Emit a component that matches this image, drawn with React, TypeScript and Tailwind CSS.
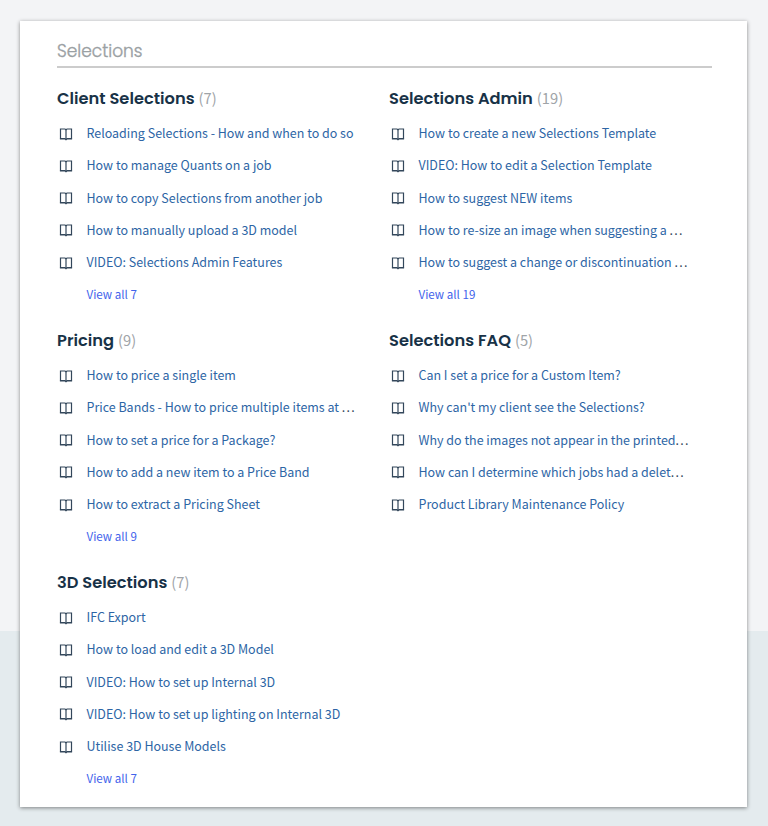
interface Folder {
	title: string
	count: number
	articles: string[]
}

const folders: Folder[] = [
	{
		title: 'Client Selections',
		count: 7,
		articles: [
			'Reloading Selections - How and when to do so',
			'How to manage Quants on a job',
			'How to copy Selections from another job',
			'How to manually upload a 3D model',
			'VIDEO: Selections Admin Features',
		],
	},
	{
		title: 'Selections Admin',
		count: 19,
		articles: [
			'How to create a new Selections Template',
			'VIDEO: How to edit a Selection Template',
			'How to suggest NEW items',
			'How to re-size an image when suggesting a …',
			'How to suggest a change or discontinuation …',
		],
	},
	{
		title: 'Pricing',
		count: 9,
		articles: [
			'How to price a single item',
			'Price Bands - How to price multiple items at …',
			'How to set a price for a Package?',
			'How to add a new item to a Price Band',
			'How to extract a Pricing Sheet',
		],
	},
	{
		title: 'Selections FAQ',
		count: 5,
		articles: [
			'Can I set a price for a Custom Item?',
			"Why can't my client see the Selections?",
			'Why do the images not appear in the printed…',
			'How can I determine which jobs had a delet…',
			'Product Library Maintenance Policy',
		],
	},
	{
		title: '3D Selections',
		count: 7,
		articles: [
			'IFC Export',
			'How to load and edit a 3D Model',
			'VIDEO: How to set up Internal 3D',
			'VIDEO: How to set up lighting on Internal 3D',
			'Utilise 3D House Models',
		],
	},
]

function BookIcon() {
	return (
		<svg
			viewBox="0 0 14 14"
			className="ml-[2px] h-3.5 w-3.5 shrink-0 text-[#33475b]"
			fill="none"
			stroke="currentColor"
		>
			<path d="M1.5 11.5V2H6L7 2.7L8 2H12.5V11.5" strokeWidth="1.2" />
			<path d="M7 2.5V12" strokeWidth="1.2" />
			<path d="M0.9 11.7H5.8L7 12.5L8.2 11.7H13.1" strokeWidth="1.5" />
		</svg>
	)
}

function Article({ name }: { name: string }) {
	const clipped = name.endsWith('…')

	return (
		<li className="flex h-[32.25px] items-center">
			<BookIcon />
			<span className="ml-[13.5px] whitespace-nowrap">
				<a href="#" className="text-[#2d65a5]">
					{clipped ? name.slice(0, -1) : name}
				</a>
				{clipped && <span className="tracking-[1.3px] text-[#33475b]">...</span>}
			</span>
		</li>
	)
}

function FolderSection({ folder }: { folder: Folder }) {
	return (
		<section className="h-[242px]">
			<h3 className="flex h-9 items-center gap-[4px] whitespace-nowrap">
				<a
					href="#"
					className="font-[Poppins,Inter,sans-serif] text-[16.25px] font-semibold text-[#183247]"
				>
					{folder.title}
				</a>
				<span className="pb-[2px] text-[14.7px] text-[#a0a4a8]">
					({folder.count})
				</span>
			</h3>
			<ul className="text-[12.47px]">
				{folder.articles.map((name) => (
					<Article key={name} name={name} />
				))}
			</ul>
			{folder.count > folder.articles.length && (
				<a
					href="#"
					className="ml-[29.5px] flex h-[32.25px] items-center text-[11.6px] text-[#4263eb]"
				>
					View all {folder.count}
				</a>
			)}
		</section>
	)
}

export default function App() {
	return (
		<div className="flex h-[826px] w-[768px] flex-col bg-[linear-gradient(#f3f4f6_631px,#e4ebee_631px)] pt-[21px] pl-5 font-['Noto_Sans_CJK_SC',sans-serif]">
			<main className="h-[786px] w-[727px] bg-white px-[37px] pt-[15px] shadow-[0_1px_4px_rgba(0,0,0,0.45)]">
				<h2 className="h-8 w-[655px] border-b-2 border-[#cccccc] font-[Poppins,Inter,sans-serif] text-[17px] leading-[30px] font-light text-[#9aa0a3] [-webkit-text-stroke:0.35px_#9aa0a3]">
					Selections
				</h2>
				<div className="mt-[13.4px] grid grid-cols-[332px_323px]">
					{folders.map((folder) => (
						<FolderSection key={folder.title} folder={folder} />
					))}
				</div>
			</main>
		</div>
	)
}
